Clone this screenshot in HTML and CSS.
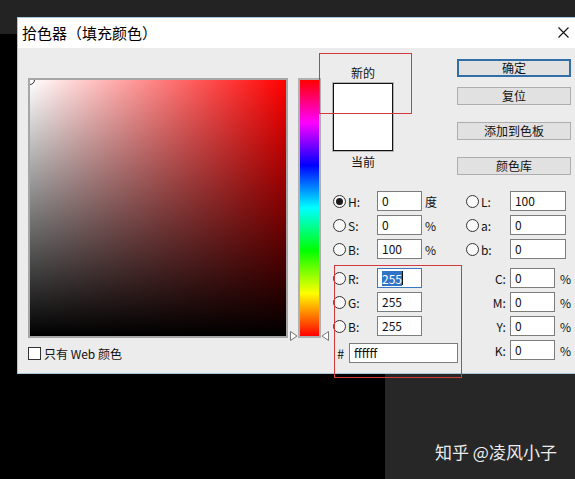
FILE: index.html
```html
<!DOCTYPE html>
<html lang="zh">
<head>
<meta charset="utf-8">
<title>拾色器</title>
<link rel="stylesheet" href="styles.css">
</head>
<body>
<div class="desk">
  <div class="topbar"></div>
  <div class="panel-dark"></div>

  <div class="dialog">
    <div class="titlebar">
      <span class="title">拾色器（填充颜色）</span>
      <svg class="close" width="11" height="11" viewBox="0 0 11 11"><path d="M0.5 0.5 L10.5 10.5 M10.5 0.5 L0.5 10.5" stroke="#111" stroke-width="1.1" fill="none"/></svg>
    </div>
    <div class="body">
      <div class="picker-col">
        <div class="pickers">
          <div class="field"><div class="field-inner"><span class="marker"></span></div></div>
          <div class="hue-wrap">
            <svg class="tri tri-l" width="8" height="10" viewBox="0 0 8 10"><path d="M0.5 0.5 L7 5 L0.5 9.5 Z" fill="#fff" stroke="#777" stroke-width="1"/></svg>
            <div class="hue"></div>
            <svg class="tri tri-r" width="8" height="10" viewBox="0 0 8 10"><path d="M7.5 0.5 L1 5 L7.5 9.5 Z" fill="#fff" stroke="#777" stroke-width="1"/></svg>
          </div>
        </div>
        <div class="webonly"><span class="checkbox"></span><span>只有 Web 颜色</span></div>
      </div>

      <div class="right">
        <div class="top-area">
          <div class="swatch-col">
            <div class="sw-label">新的</div>
            <div class="swatch"><div class="sw-new"></div><div class="sw-cur"></div></div>
            <div class="sw-label sw-bottom">当前</div>
          </div>
          <div class="buttons">
            <div class="btn btn-default">确定</div>
            <div class="btn btn-2">复位</div>
            <div class="btn btn-3">添加到色板</div>
            <div class="btn btn-3">颜色库</div>
          </div>
        </div>

        <div class="form">
          <div class="fcol fcol-left">
            <div class="row"><span class="radio on"></span><span class="lab">H:</span><span class="inp">0</span><span class="unit">度</span></div>
            <div class="row"><span class="radio"></span><span class="lab">S:</span><span class="inp">0</span><span class="unit">%</span></div>
            <div class="row"><span class="radio"></span><span class="lab">B:</span><span class="inp">100</span><span class="unit">%</span></div>
            <div class="row gap"><span class="radio"></span><span class="lab">R:</span><span class="inp focus"><span class="sel">255</span><span class="caret"></span></span></div>
            <div class="row"><span class="radio"></span><span class="lab">G:</span><span class="inp">255</span></div>
            <div class="row"><span class="radio"></span><span class="lab">B:</span><span class="inp">255</span></div>
            <div class="row hex"><span class="hash">#</span><span class="inp wide">ffffff</span></div>
          </div>
          <div class="fcol fcol-right">
            <div class="row"><span class="radio"></span><span class="lab">L:</span><span class="inp long">100</span></div>
            <div class="row"><span class="radio"></span><span class="lab">a:</span><span class="inp long">0</span></div>
            <div class="row"><span class="radio"></span><span class="lab">b:</span><span class="inp long">0</span></div>
            <div class="row gap"><span class="clab">C:</span><span class="inp">0</span><span class="pct">%</span></div>
            <div class="row"><span class="clab">M:</span><span class="inp">0</span><span class="pct">%</span></div>
            <div class="row"><span class="clab">Y:</span><span class="inp">0</span><span class="pct">%</span></div>
            <div class="row"><span class="clab">K:</span><span class="inp">0</span><span class="pct">%</span></div>
          </div>
        </div>
      </div>
    </div>
  </div>

  <div class="mark mark1"></div>
  <div class="mark mark2"></div>
  <div class="watermark">知乎 @凌风小子</div>
</div>
</body>
</html>
```
FILE: styles.css
```css
* { box-sizing: border-box; }
html, body { margin: 0; padding: 0; }
body {
  background: #000;
  font-family: "Noto Sans CJK SC", "Noto Sans", sans-serif;
  font-size: 12px;
  color: #111;
}
.desk {
  position: relative;
  width: 575px;
  height: 479px;
  overflow: hidden;
  background: #000;
}
.topbar {
  position: absolute;
  left: 0; top: 0;
  width: 100%;
  height: 34px;
  background: #232323;
}
.panel-dark {
  position: absolute;
  left: 385px; top: 374px;
  right: 0; bottom: 0;
  background: #272727;
}
.dialog {
  position: absolute;
  left: 17px; top: 17px;
  width: 572px;
  height: 357px;
  border: 1px solid #a7c6dc;
  background: #ececec;
  display: flex;
  flex-direction: column;
}
.titlebar {
  height: 30px;
  flex: none;
  background: #fff;
  display: flex;
  align-items: center;
  justify-content: space-between;
  padding: 0 19px 0 4px;
}
.title {
  font-size: 15px;
  color: #000;
  line-height: 30px;
}
.close { display: block; margin-top: -1px; }

.body {
  flex: 1;
  display: flex;
  padding-left: 10px;
}
.picker-col { margin-top: 30px; }
.pickers { display: flex; }
.field {
  width: 260px;
  height: 260px;
  border: 2px solid #a6a6a6;
}
.field-inner {
  position: relative;
  width: 256px;
  height: 256px;
  overflow: hidden;
  background:
    linear-gradient(to bottom, rgba(0,0,0,0), #000),
    linear-gradient(to right, #fff, #ff0000);
}
.marker {
  position: absolute;
  left: -5px; top: -5px;
  width: 10px; height: 10px;
  border: 1px solid #333;
  border-radius: 50%;
}
.hue-wrap {
  position: relative;
  margin-left: 10px;
}
.hue {
  width: 23px;
  height: 260px;
  border: 2px solid #b0b0b0;
  background: linear-gradient(to bottom,
    #ff0000 0%, #ff00ff 16.67%, #0000ff 33.33%, #00ffff 50%,
    #00ff00 66.67%, #ffff00 83.33%, #ff0000 100%);
}
.tri { position: absolute; top: 253px; display: block; }
.tri-l { left: -8px; }
.tri-r { left: 23px; }

.webonly {
  margin-top: 8px;
  height: 14px;
  display: flex;
  align-items: center;
  font-size: 12px;
  color: #111;
}
.checkbox {
  width: 13px; height: 13px;
  border: 1px solid #333;
  background: #fff;
  margin-right: 3px;
}

.right {
  margin-left: 12px;
  width: 238px;
}
.top-area {
  height: 141px;
  display: flex;
}
.swatch-col {
  width: 60px;
  padding-top: 17px;
}
.sw-label {
  line-height: 16px;
  text-align: center;
  font-size: 12px;
}
.swatch {
  margin-top: 2px;
  width: 60px;
  height: 68px;
  border: 1px solid #111;
  box-shadow: 0 0 0 1px #b4b4b4;
  display: flex;
  flex-direction: column;
}
.sw-new, .sw-cur { flex: 1; background: #fff; }
.sw-bottom { margin-top: 3px; }

.buttons {
  margin-left: 64px;
  width: 114px;
  padding-top: 11px;
}
.btn {
  height: 18px;
  border: 1px solid #adadad;
  background: #e1e1e1;
  text-align: center;
  font-size: 12px;
  line-height: 16px;
  color: #111;
}
.btn-default {
  border: 2px solid #2f6ea6;
  line-height: 14px;
}
.btn-2 { margin-top: 10px; }
.btn-3 { margin-top: 17px; }

.form {
  display: flex;
}
.fcol-left { width: 134px; }
.row {
  height: 24px;
  display: flex;
  align-items: center;
}
.row.gap { margin-top: 5px; }
.row.hex { margin-top: 3px; }
.radio {
  width: 13px; height: 13px;
  flex: none;
  border: 1px solid #333;
  border-radius: 50%;
  background: #f8f8f8;
  position: relative;
}
.radio.on::after {
  content: "";
  position: absolute;
  left: 2px; top: 2px;
  width: 7px; height: 7px;
  border-radius: 50%;
  background: #1a1a1a;
}
.lab {
  width: 31px;
  padding-left: 2px;
  flex: none;
}
.inp {
  width: 45px;
  height: 20px;
  flex: none;
  border: 1px solid #7d7d7d;
  background: #fff;
  padding-left: 4px;
  line-height: 18px;
  font-size: 12px;
  color: #111;
  display: flex;
  align-items: center;
}
.inp.long { width: 56px; }
.inp.wide { width: 109px; }
.inp.focus { border-color: #3b78c2; }
.sel {
  background: #2f74c7;
  color: #fff;
  line-height: 15px;
}
.caret {
  width: 1px;
  height: 14px;
  background: #111;
}
.unit { margin-left: 3px; }
.hash {
  width: 16px;
  padding-left: 4px;
  flex: none;
  font-size: 13px;
}
.clab {
  width: 44px;
  padding-right: 4px;
  text-align: right;
  flex: none;
}
.pct { margin-left: 5px; }

.mark {
  position: absolute;
  border: 1px solid #d43a3c;
}
.mark1 { left: 319px; top: 53px; width: 93px; height: 61px; }
.mark2 { left: 334px; top: 265px; width: 128px; height: 113px; }

.watermark {
  position: absolute;
  left: 435px;
  top: 440px;
  font-size: 17px;
  line-height: 24px;
  color: #ededed;
}
```
